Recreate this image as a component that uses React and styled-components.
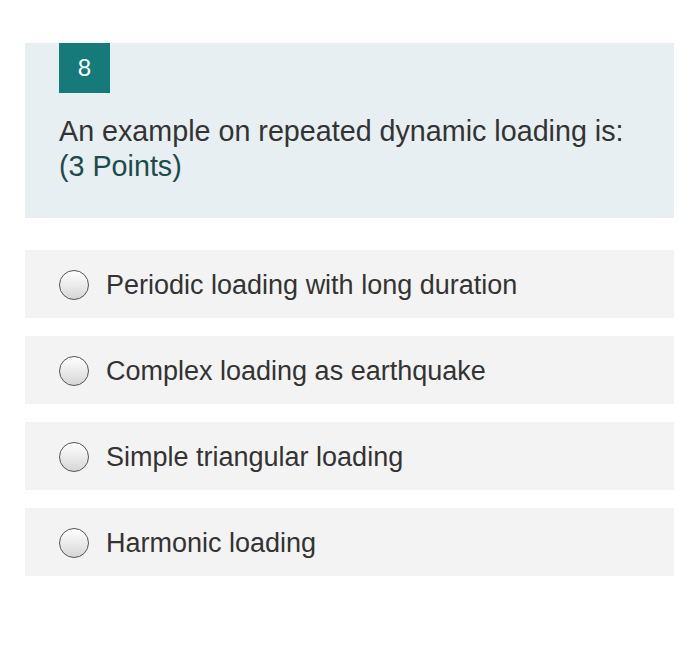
import React from "react";
import styled, { createGlobalStyle } from "styled-components";

const Global = createGlobalStyle`
  html, body { margin: 0; padding: 0; background: #fff; }
  body { font-family: "Liberation Sans", Arial, sans-serif; }
`;

const Page = styled.div`
  width: 700px;
  height: 651px;
  box-sizing: border-box;
  padding: 43px 26px 0 25px;
  display: flex;
  flex-direction: column;
`;

const QuestionCard = styled.div`
  background: #e7eff2;
  height: 175px;
  box-sizing: border-box;
  padding: 0 34px;
  display: flex;
  flex-direction: column;
`;

const Badge = styled.div`
  width: 51px;
  height: 50px;
  background: #167a7b;
  color: #fff;
  font-size: 24px;
  display: flex;
  align-items: center;
  justify-content: center;
`;

const Title = styled.div`
  margin-top: 21px;
  font-size: 28.7px;
  line-height: 35px;
  color: #333;
`;

const Points = styled.div`
  font-size: 28.7px;
  line-height: 35px;
  color: #1c4b4b;
`;

const Options = styled.div`
  margin-top: 32px;
  display: flex;
  flex-direction: column;
  gap: 18px;
`;

const Option = styled.div`
  height: 68px;
  background: #f3f3f3;
  display: flex;
  align-items: center;
  padding-left: 34px;
  gap: 17px;
`;

const Radio = styled.span`
  width: 28px;
  height: 28px;
  border-radius: 50%;
  border: 1.5px solid #555;
  background: linear-gradient(180deg, #ffffff 0%, #d6d6d6 100%);
  flex: none;
  margin-top: 2px;
`;

const Label = styled.span`
  font-size: 27px;
  color: #333;
  margin-top: 2px;
`;

const options = [
  "Periodic loading with long duration",
  "Complex loading as earthquake",
  "Simple triangular loading",
  "Harmonic loading",
];

export default function App() {
  return (
    <>
      <Global />
      <Page>
        <QuestionCard>
          <Badge>8</Badge>
          <Title>An example on repeated dynamic loading is:</Title>
          <Points>(3 Points)</Points>
        </QuestionCard>
        <Options>
          {options.map((o) => (
            <Option key={o}>
              <Radio />
              <Label>{o}</Label>
            </Option>
          ))}
        </Options>
      </Page>
    </>
  );
}
